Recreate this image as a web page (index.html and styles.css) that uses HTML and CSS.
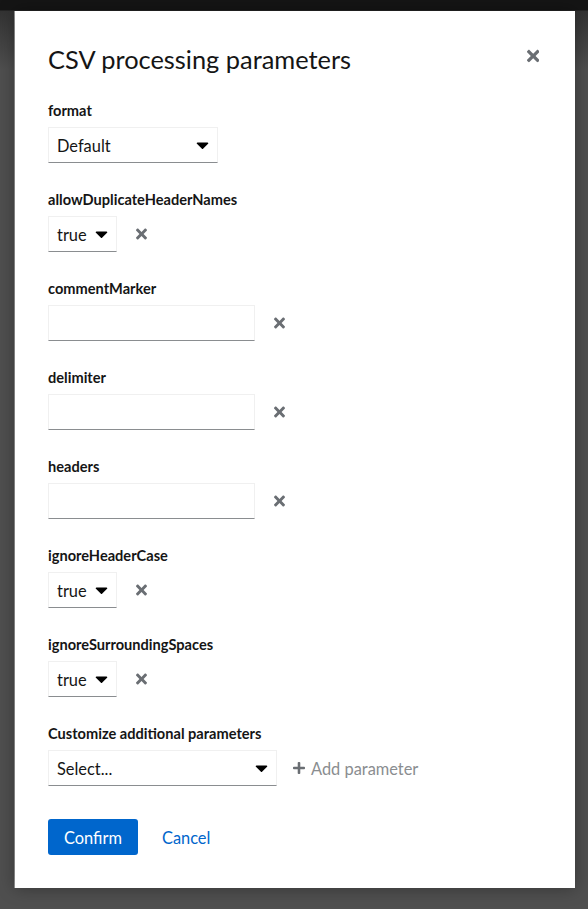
FILE: index.html
```html
<!DOCTYPE html>
<html lang="en">
<head>
    <meta charset="UTF-8">
    <meta name="viewport" content="width=device-width, initial-scale=1.0">
    <title>CSV processing parameters</title>
    <link rel="stylesheet" href="styles.css">
</head>
<body>
    <div class="backdrop">
        <div class="modal">
            <div class="modal-header">
                <h1 class="modal-title">CSV processing parameters</h1>
                <button class="close-btn" aria-label="Close">
                    <svg class="icon-times lg" viewBox="0 0 352 512"><path d="M242.72 256l100.07-100.07c12.28-12.28 12.28-32.19 0-44.48l-22.24-22.24c-12.28-12.28-32.19-12.28-44.48 0L176 189.28 75.930 89.21c-12.28-12.28-32.19-12.28-44.48 0L9.21 111.45c-12.28 12.28-12.28 32.19 0 44.48L109.28 256 9.21 356.07c-12.28 12.28-12.28 32.19 0 44.480l22.24 22.24c12.28 12.28 32.2 12.28 44.48 0L176 322.72l100.07 100.07c12.28 12.28 32.2 12.28 44.48 0l22.24-22.24c12.28-12.28 12.28-32.19 0-44.48L242.72 256z"/></svg>
                </button>
            </div>

            <form class="form">
                <div class="form-group">
                    <label class="form-label">format</label>
                    <div class="form-row">
                        <div class="select select-format">
                            <span>Default</span>
                            <svg class="caret" viewBox="0 0 320 512"><path d="M31.3 192h257.3c17.8 0 26.7 21.5 14.1 34.1L174.1 354.8c-7.8 7.8-20.5 7.8-28.3 0L17.2 226.1C4.6 213.5 13.5 192 31.3 192z"/></svg>
                        </div>
                    </div>
                </div>

                <div class="form-group">
                    <label class="form-label">allowDuplicateHeaderNames</label>
                    <div class="form-row">
                        <div class="select select-bool">
                            <span>true</span>
                            <svg class="caret" viewBox="0 0 320 512"><path d="M31.3 192h257.3c17.8 0 26.7 21.5 14.1 34.1L174.1 354.8c-7.8 7.8-20.5 7.8-28.3 0L17.2 226.1C4.6 213.5 13.5 192 31.3 192z"/></svg>
                        </div>
                        <button type="button" class="remove-btn" aria-label="Remove">
                            <svg class="icon-times" viewBox="0 0 352 512"><path d="M242.72 256l100.07-100.07c12.28-12.28 12.28-32.19 0-44.48l-22.24-22.24c-12.28-12.28-32.19-12.28-44.48 0L176 189.28 75.93 89.21c-12.28-12.28-32.19-12.28-44.48 0L9.21 111.45c-12.28 12.28-12.28 32.19 0 44.48L109.28 256 9.21 356.07c-12.28 12.28-12.28 32.19 0 44.48l22.24 22.24c12.28 12.28 32.2 12.28 44.48 0L176 322.72l100.07 100.07c12.28 12.28 32.2 12.28 44.48 0l22.24-22.24c12.28-12.28 12.28-32.19 0-44.48L242.72 256z"/></svg>
                        </button>
                    </div>
                </div>

                <div class="form-group">
                    <label class="form-label">commentMarker</label>
                    <div class="form-row">
                        <input type="text" class="text-input">
                        <button type="button" class="remove-btn" aria-label="Remove">
                            <svg class="icon-times" viewBox="0 0 352 512"><path d="M242.72 256l100.07-100.07c12.28-12.28 12.28-32.19 0-44.48l-22.24-22.24c-12.28-12.28-32.19-12.28-44.48 0L176 189.28 75.93 89.21c-12.28-12.28-32.19-12.28-44.48 0L9.21 111.45c-12.28 12.28-12.28 32.19 0 44.48L109.28 256 9.21 356.07c-12.28 12.28-12.28 32.19 0 44.48l22.24 22.24c12.28 12.28 32.2 12.28 44.48 0L176 322.72l100.07 100.07c12.28 12.28 32.2 12.28 44.48 0l22.24-22.24c12.28-12.28 12.28-32.19 0-44.48L242.72 256z"/></svg>
                        </button>
                    </div>
                </div>

                <div class="form-group">
                    <label class="form-label">delimiter</label>
                    <div class="form-row">
                        <input type="text" class="text-input">
                        <button type="button" class="remove-btn" aria-label="Remove">
                            <svg class="icon-times" viewBox="0 0 352 512"><path d="M242.72 256l100.07-100.07c12.28-12.28 12.28-32.19 0-44.48l-22.24-22.24c-12.28-12.28-32.19-12.28-44.48 0L176 189.28 75.93 89.21c-12.28-12.28-32.19-12.28-44.48 0L9.21 111.45c-12.28 12.28-12.28 32.19 0 44.48L109.28 256 9.21 356.07c-12.28 12.28-12.28 32.19 0 44.48l22.24 22.24c12.28 12.28 32.2 12.28 44.48 0L176 322.72l100.07 100.07c12.28 12.28 32.2 12.28 44.48 0l22.24-22.24c12.28-12.28 12.28-32.19 0-44.48L242.72 256z"/></svg>
                        </button>
                    </div>
                </div>

                <div class="form-group">
                    <label class="form-label">headers</label>
                    <div class="form-row">
                        <input type="text" class="text-input">
                        <button type="button" class="remove-btn" aria-label="Remove">
                            <svg class="icon-times" viewBox="0 0 352 512"><path d="M242.72 256l100.07-100.07c12.28-12.28 12.28-32.19 0-44.48l-22.24-22.24c-12.28-12.28-32.19-12.28-44.48 0L176 189.28 75.93 89.21c-12.28-12.28-32.19-12.28-44.48 0L9.21 111.45c-12.28 12.28-12.28 32.19 0 44.48L109.28 256 9.21 356.07c-12.28 12.28-12.28 32.19 0 44.48l22.24 22.24c12.28 12.28 32.2 12.28 44.48 0L176 322.72l100.07 100.07c12.28 12.28 32.2 12.28 44.48 0l22.24-22.24c12.28-12.28 12.28-32.19 0-44.48L242.72 256z"/></svg>
                        </button>
                    </div>
                </div>

                <div class="form-group">
                    <label class="form-label">ignoreHeaderCase</label>
                    <div class="form-row">
                        <div class="select select-bool">
                            <span>true</span>
                            <svg class="caret" viewBox="0 0 320 512"><path d="M31.3 192h257.3c17.8 0 26.7 21.5 14.1 34.1L174.1 354.8c-7.8 7.8-20.5 7.8-28.3 0L17.2 226.1C4.6 213.5 13.5 192 31.3 192z"/></svg>
                        </div>
                        <button type="button" class="remove-btn" aria-label="Remove">
                            <svg class="icon-times" viewBox="0 0 352 512"><path d="M242.72 256l100.07-100.07c12.28-12.28 12.28-32.19 0-44.48l-22.24-22.24c-12.28-12.28-32.19-12.28-44.48 0L176 189.28 75.93 89.21c-12.28-12.28-32.19-12.28-44.48 0L9.21 111.45c-12.28 12.28-12.28 32.19 0 44.48L109.28 256 9.21 356.07c-12.28 12.28-12.28 32.19 0 44.48l22.24 22.24c12.28 12.28 32.2 12.28 44.48 0L176 322.72l100.07 100.07c12.28 12.28 32.2 12.28 44.48 0l22.24-22.24c12.28-12.28 12.28-32.19 0-44.48L242.72 256z"/></svg>
                        </button>
                    </div>
                </div>

                <div class="form-group">
                    <label class="form-label">ignoreSurroundingSpaces</label>
                    <div class="form-row">
                        <div class="select select-bool">
                            <span>true</span>
                            <svg class="caret" viewBox="0 0 320 512"><path d="M31.3 192h257.3c17.8 0 26.7 21.5 14.1 34.1L174.1 354.8c-7.8 7.8-20.5 7.8-28.3 0L17.2 226.1C4.6 213.5 13.5 192 31.3 192z"/></svg>
                        </div>
                        <button type="button" class="remove-btn" aria-label="Remove">
                            <svg class="icon-times" viewBox="0 0 352 512"><path d="M242.72 256l100.07-100.07c12.28-12.28 12.28-32.19 0-44.48l-22.24-22.24c-12.28-12.28-32.19-12.28-44.48 0L176 189.28 75.93 89.21c-12.28-12.28-32.19-12.28-44.48 0L9.21 111.45c-12.28 12.28-12.28 32.19 0 44.48L109.28 256 9.21 356.07c-12.28 12.28-12.28 32.19 0 44.48l22.24 22.24c12.28 12.28 32.2 12.28 44.48 0L176 322.72l100.07 100.07c12.28 12.28 32.2 12.28 44.48 0l22.24-22.24c12.28-12.28 12.28-32.19 0-44.48L242.72 256z"/></svg>
                        </button>
                    </div>
                </div>

                <div class="form-group">
                    <label class="form-label">Customize additional parameters</label>
                    <div class="form-row">
                        <div class="select select-wide">
                            <span>Select...</span>
                            <svg class="caret" viewBox="0 0 320 512"><path d="M31.3 192h257.3c17.8 0 26.7 21.5 14.1 34.1L174.1 354.8c-7.8 7.8-20.5 7.8-28.3 0L17.2 226.1C4.6 213.5 13.5 192 31.3 192z"/></svg>
                        </div>
                        <button type="button" class="add-btn" disabled>
                            <svg class="icon-plus" viewBox="0 0 448 512"><path d="M416 208H272V64c0-17.67-14.33-32-32-32h-32c-17.67 0-32 14.330-32 32v144H32c-17.67 0-32 14.33-32 32v32c0 17.67 14.33 32 32 32h144v144c0 17.67 14.33 32 32 32h32c17.67 0 32-14.33 32-32V304h144c17.67 0 32-14.33 32-32v-32c0-17.67-14.33-32-32-32z"/></svg>
                            Add parameter
                        </button>
                    </div>
                </div>
            </form>

            <div class="modal-footer">
                <button type="button" class="btn btn-primary">Confirm</button>
                <button type="button" class="btn btn-link">Cancel</button>
            </div>
        </div>
    </div>
</body>
</html>
```

FILE: styles.css
```css
* {
    box-sizing: border-box;
}
body {
    margin: 0;
    height: 909px;
    overflow: hidden;
    background: linear-gradient(#151515 0, #151515 10px, #333 11px, #4f4f4f 70px);
    font-family: Lato, 'Noto Sans', sans-serif;
    color: #151515;
}
.backdrop {
    padding: 11px 13px 0 15px;
}
.modal {
    width: 560px;
    background-color: #fff;
    padding: 33px 32px 33px 33px;
    box-shadow: 0 0 16px rgba(0, 0, 0, 0.35), -1px 0 0 #9a9a9a;
}
.modal-header {
    display: flex;
    justify-content: space-between;
    align-items: flex-start;
}
.modal-title {
    margin: 0;
    font-size: 25.4px;
    font-weight: 400;
    line-height: 31px;
}
.close-btn {
    background: none;
    border: none;
    padding: 3px 4px 0;
    cursor: pointer;
    color: #6a6e73;
    display: flex;
}
.icon-times {
    height: 16px;
    width: 11px;
    fill: currentColor;
}
.icon-times.lg {
    height: 18px;
    width: 12.4px;
}
.form {
    margin-top: 25px;
    display: flex;
    flex-direction: column;
    gap: 26px;
}
.form-label {
    display: block;
    font-size: 14.6px;
    font-weight: 700;
    line-height: 21px;
    margin-bottom: 6px;
}
.form-row {
    display: flex;
    align-items: center;
}
.select,
.text-input {
    height: 36px;
    border: 1px solid #f0f0f0;
    border-bottom-color: #8a8d90;
    background-color: #fff;
    font-family: inherit;
    font-size: 16.4px;
    color: #151515;
}
.select {
    display: flex;
    align-items: center;
    justify-content: space-between;
    padding: 0 8px 0 8px;
}
.caret {
    width: 13px;
    height: 20px;
    fill: #000;
}
.select-format {
    width: 170px;
}
.select-bool {
    width: 69px;
}
.select-wide {
    width: 229px;
}
.text-input {
    width: 207px;
    padding: 0 8px;
}
.remove-btn {
    background: none;
    border: none;
    color: #6a6e73;
    padding: 0;
    margin-left: 19px;
    display: flex;
    cursor: pointer;
}
.add-btn {
    background: none;
    border: none;
    display: flex;
    align-items: center;
    gap: 6px;
    margin-left: 16px;
    padding: 0;
    font-family: inherit;
    font-size: 16.4px;
    color: #8a8d90;
}
.icon-plus {
    width: 12px;
    height: 14px;
    fill: #6a6e73;
}
.modal-footer {
    margin-top: 33px;
    display: flex;
    gap: 8px;
}
.btn {
    height: 36px;
    padding: 6px 16px;
    border: none;
    border-radius: 3px;
    font-family: inherit;
    font-size: 16.4px;
    cursor: pointer;
}
.btn-primary {
    background-color: #0066cc;
    color: #fff;
}
.btn-link {
    background: none;
    color: #0066cc;
}
```
